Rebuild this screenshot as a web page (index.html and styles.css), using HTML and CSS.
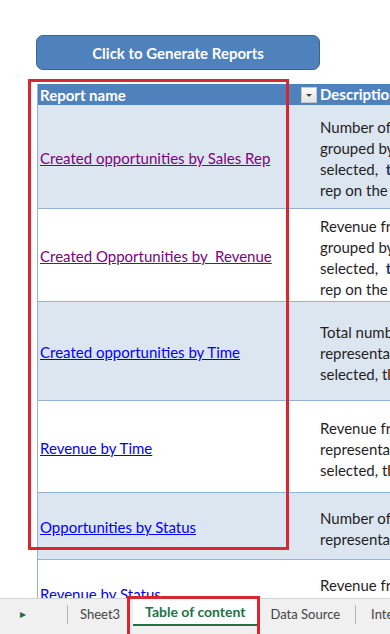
FILE: index.html
```html
<!DOCTYPE html>
<html lang="en">
    <head>
        <meta charset="UTF-8" />
        <meta name="viewport" content="width=device-width, initial-scale=1.0" />
        <title>Table of content</title>
        <link rel="stylesheet" href="styles.css">
    </head>
    <body>
        <div class="sheet">
            <!-- generate button -->
            <div class="generate">Click to Generate Reports</div>

            <!-- report table -->
            <div class="table">
                <div class="row head">
                    <div class="cell name">
                        <span>Report name</span>
                        <span class="filter"></span>
                    </div>
                    <div class="cell desc"><span>Description</span></div>
                </div>

                <div class="row band r1">
                    <div class="cell name"><a class="visited" href="#">Created opportunities by Sales Rep</a></div>
                    <div class="cell desc"><p>Number of opportunities created<br>grouped by sales representative. If<br>selected,&nbsp; <b class="blue">the</b> report shows each<br>rep on the chart</p></div>
                </div>

                <div class="row r2">
                    <div class="cell name"><a class="visited" href="#">Created Opportunities by&nbsp; Revenue</a></div>
                    <div class="cell desc"><p>Revenue from created opportunities<br>grouped by sales representative. If<br>selected,&nbsp; <b class="blue">the</b> report shows each<br>rep on the chart</p></div>
                </div>

                <div class="row band r3">
                    <div class="cell name"><a href="#">Created opportunities by Time</a></div>
                    <div class="cell desc"><p>Total number of opportunities<br>representative over time. If<br>selected, t<b class="brown">he</b> report shows</p></div>
                </div>

                <div class="row r4">
                    <div class="cell name"><a href="#">Revenue by Time</a></div>
                    <div class="cell desc"><p>Revenue from opportunities<br>representative over time. If<br>selected, t<b class="brown">he</b> report shows</p></div>
                </div>

                <div class="row band r5">
                    <div class="cell name"><a href="#">Opportunities by Status</a></div>
                    <div class="cell desc"><p>Number of opportunities by<br>representative and status</p></div>
                </div>

                <div class="row r6">
                    <div class="cell name"><a href="#">Revenue by Status</a></div>
                    <div class="cell desc"><p>Revenue from opportunities by<br>representative and status</p></div>
                </div>
            </div>
        </div>

        <!-- sheet tabs -->
        <div class="tabs">
            <span class="nav">&#9656;</span>
            <span class="sep"></span>
            <span class="tab t-sheet3">Sheet3</span>
            <span class="tab active">Table of content</span>
            <span class="tab t-data">Data Source</span>
            <span class="sep"></span>
            <span class="tab t-inter">Interface</span>
        </div>

        <!-- red highlight marks -->
        <div class="mark mark-table"></div>
        <div class="mark mark-tab"></div>
    </body>
</html>
```

FILE: styles.css
```css
body {
    margin: 0;
    padding: 0;
    width: 390px;
    height: 634px;
    overflow: hidden;
    position: relative;
    background-color: #fff;
    font-family: Lato, "Open Sans", sans-serif;
    font-size: 15px;
    color: #1f1f1f;
}

.sheet {
    padding: 35px 0 0 36px;
}

.generate {
    width: 282px;
    height: 33px;
    border: 1px solid #3a6593;
    border-radius: 7px;
    background-color: #4f81bd;
    color: #fff;
    font-weight: bold;
    font-size: 15px;
    display: flex;
    justify-content: center;
    align-items: center;
}

.table {
    margin-top: 14px;
    margin-left: 1px;
    width: 600px;
    border-left: 1px solid #95b3d7;
}

.row {
    display: flex;
    border-bottom: 1px solid #95b3d7;
}

.row.band {
    background-color: #dce6f1;
}

.cell {
    flex: none;
    display: flex;
    align-items: center;
    white-space: nowrap;
}

.cell.name {
    width: 279px;
    padding-left: 2px;
    padding-top: 2px;
    position: relative;
}

.cell.desc {
    padding-left: 1px;
    padding-top: 5px;
    line-height: 21px;
}

.cell p {
    margin: 0;
}

.head {
    height: 21px;
    background-color: #4f81bd;
    color: #fff;
    font-weight: bold;
    border-bottom: none;
}

.head .cell {
    padding-top: 0;
}

.filter {
    position: absolute;
    right: 2px;
    top: 3px;
    width: 14px;
    height: 14px;
    border: 1px solid #c8c8c8;
    background: linear-gradient(#fdfdfd, #e4e4e4);
}

.filter::after {
    content: "";
    position: absolute;
    left: 4px;
    top: 6px;
    border-left: 3px solid transparent;
    border-right: 3px solid transparent;
    border-top: 3px solid #444;
}

.r1 { height: 103px; }
.r2 { height: 92px; }
.r3 { height: 98px; }
.r4 { height: 91px; }
.r5 { height: 66px; }
.r6 { height: 66px; }

a {
    color: #0000ff;
    text-decoration: underline;
}

a.visited {
    color: #800080;
}

.blue {
    color: #1f3864;
}

.brown {
    color: #843c0c;
}

.tabs {
    position: absolute;
    left: 0;
    right: 0;
    bottom: 0;
    height: 35px;
    background-color: #f0f0f0;
    border-top: 1px solid #d4d4d4;
    display: flex;
    align-items: stretch;
    font-size: 13px;
    color: #444;
    white-space: nowrap;
    overflow: hidden;
}

.tabs > span {
    flex: none;
}

.nav {
    width: 47px;
    padding-left: 20px;
    display: flex;
    align-items: center;
    padding-bottom: 6px;
    color: #1e6b3c;
    font-size: 12px;
}

.sep {
    width: 1px;
    margin: 6px 0 10px;
    background-color: #b5b5b5;
}

.tab {
    display: flex;
    align-items: center;
    padding-bottom: 6px;
}

.t-sheet3 {
    padding-left: 12px;
    padding-right: 13px;
}

.tab.active {
    padding: 0 13px 0 12px;
    background-color: #fff;
    color: #217346;
    font-size: 14px;
    font-weight: bold;
    border-bottom: 2px solid #217346;
    margin-bottom: 8px;
}

.t-data {
    padding-left: 12px;
    padding-right: 15px;
}

.t-inter {
    padding-left: 15px;
}

.mark {
    position: absolute;
    border: 3px solid #d9262f;
}

.mark-table {
    left: 28px;
    top: 79px;
    width: 255px;
    height: 465px;
}

.mark-tab {
    left: 127px;
    top: 596px;
    width: 127px;
    height: 40px;
}
```
